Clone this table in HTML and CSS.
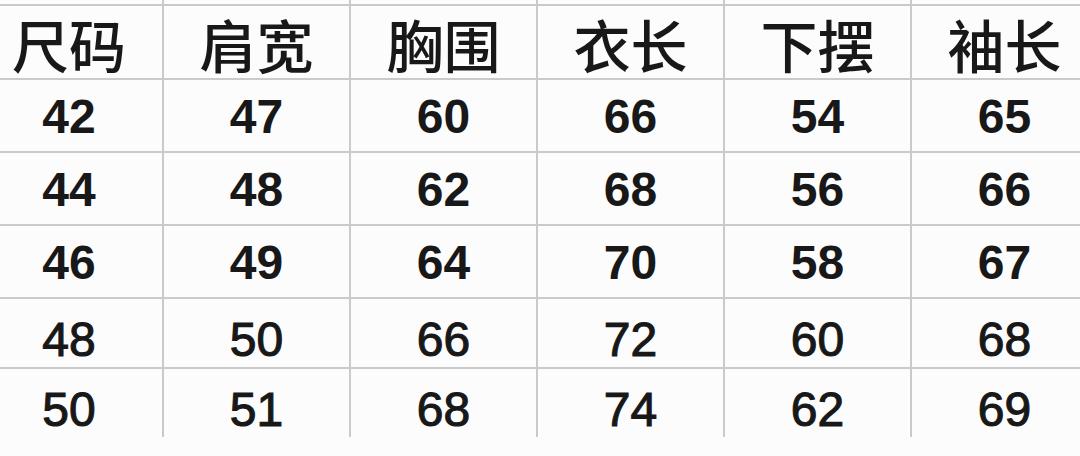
FILE: index.html
```html
<!DOCTYPE html>
<html lang="zh">
<head>
<meta charset="utf-8">
<title>尺码表</title>
<link rel="stylesheet" href="styles.css">
</head>
<body>
<div class="sheet">
  <div class="grid">
    <div class="cell top"></div><div class="cell top"></div><div class="cell top"></div><div class="cell top"></div><div class="cell top"></div><div class="cell top"></div>

    <div class="cell head">尺码</div><div class="cell head">肩宽</div><div class="cell head">胸围</div><div class="cell head">衣长</div><div class="cell head">下摆</div><div class="cell head">袖长</div>

    <div class="cell num bold">42</div><div class="cell num bold">47</div><div class="cell num bold">60</div><div class="cell num bold">66</div><div class="cell num bold">54</div><div class="cell num bold">65</div>

    <div class="cell num bold">44</div><div class="cell num bold">48</div><div class="cell num bold">62</div><div class="cell num bold">68</div><div class="cell num bold">56</div><div class="cell num bold">66</div>

    <div class="cell num bold">46</div><div class="cell num bold">49</div><div class="cell num bold">64</div><div class="cell num bold">70</div><div class="cell num bold">58</div><div class="cell num bold">67</div>

    <div class="cell num medium row4">48</div><div class="cell num medium row4">50</div><div class="cell num medium row4">66</div><div class="cell num medium row4">72</div><div class="cell num medium row4">60</div><div class="cell num medium row4">68</div>

    <div class="cell num medium last">50</div><div class="cell num medium last">51</div><div class="cell num medium last">68</div><div class="cell num medium last">74</div><div class="cell num medium last">62</div><div class="cell num medium last">69</div>
  </div>
</div>
</body>
</html>
```
FILE: styles.css
```css
html, body {
  margin: 0;
  padding: 0;
  width: 1080px;
  height: 456px;
  overflow: hidden;
  background: #fcfcfc;
}

.sheet {
  width: 1080px;
  height: 456px;
  overflow: hidden;
}

.grid {
  display: grid;
  margin-left: -24px;
  grid-template-columns: 188px 187px 187px 187px 187px 187px;
  grid-template-rows: 6px 74px 73px 73px 73px 70px 68px;
  width: 1123px;
}

.cell {
  box-sizing: border-box;
  border-right: 2px solid #cacaca;
  border-bottom: 2px solid #cacaca;
  display: flex;
  align-items: center;
  justify-content: center;
  color: #181818;
}

.head {
  font-family: "Noto Sans CJK SC", sans-serif;
  font-size: 57px;
  font-weight: 500;
  line-height: 1;
  padding-top: 2px;
}

.num {
  font-family: "Liberation Sans", Arial, sans-serif;
  font-size: 48px;
  line-height: 1;
  padding-top: 3px;
}

.bold { font-weight: 700; }

.medium {
  font-weight: 400;
  -webkit-text-stroke: 1.1px #181818;
}

.row4 {
  padding-top: 14px;
}

.last {
  border-bottom: none;
  padding-top: 14px;
  padding-bottom: 0;
}
```
